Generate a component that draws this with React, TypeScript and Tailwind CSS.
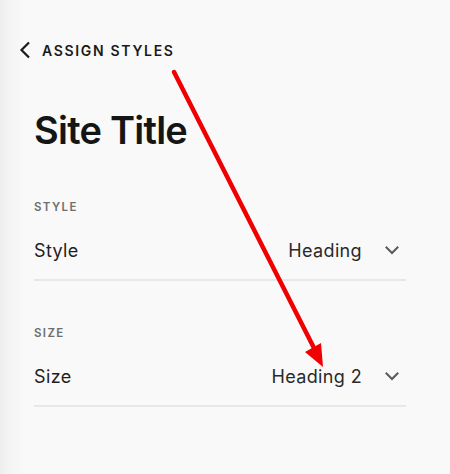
import React from "react";

function ChevronDown() {
  return (
    <svg width="14" height="9" viewBox="0 0 14 9" fill="none" className="shrink-0">
      <path d="M1.5 1.5 L7 7 L12.5 1.5" stroke="#5a5a5a" strokeWidth="2" strokeLinecap="square" />
    </svg>
  );
}

function Field({ label, name, value, gap }: { label: string; name: string; value: string; gap: string }) {
  return (
    <section className={gap}>
      <div className="h-[16px] flex items-center text-[11.5px] font-semibold tracking-[0.12em] text-[#6e6e6e]">
        {label}
      </div>
      <div className="mt-[5px] h-[60px] flex items-center border-b-2 border-[#e8e8e8]">
        <span className="text-[18px] tracking-[0.02em] text-[#1f1f1f]">{name}</span>
        <span className="ml-auto text-[18px] tracking-[0.02em] text-[#2a2a2a]">{value}</span>
        <span className="ml-[23px] mr-[7px] flex items-center">
          <ChevronDown />
        </span>
      </div>
    </section>
  );
}

export default function App() {
  return (
    <div
      className="relative h-[474px] w-full overflow-hidden bg-[#f9f9f9] bg-[linear-gradient(to_right,#eeeeee_0px,#f4f4f4_10px,#f9f9f9_24px)]"
      style={{ fontFamily: "Inter, 'Liberation Sans', sans-serif" }}
    >
      <div className="pt-[40px] pl-[19px] pr-[44px]">
        <button className="h-[20px] flex items-center gap-[11px]">
          <svg width="12" height="18" viewBox="0 0 12 18" fill="none">
            <path d="M10 1.5 L2.5 9 L10 16.5" stroke="#1a1a1a" strokeWidth="2.2" />
          </svg>
          <span className="text-[14px] font-semibold tracking-[0.12em] text-[#1a1a1a]">ASSIGN STYLES</span>
        </button>

        <div className="pl-[15px]">
          <h1 className="mt-[46px] h-[48px] flex items-center text-[38px] font-semibold tracking-[-0.02em] text-[#151515]">
            Site Title
          </h1>

          <Field gap="mt-[46px]" label="STYLE" name="Style" value="Heading" />
          <Field gap="mt-[45px]" label="SIZE" name="Size" value="Heading 2" />
        </div>
      </div>

      <svg className="pointer-events-none absolute inset-0" width="450" height="474" viewBox="0 0 450 474">
        <line x1="174" y1="72" x2="314" y2="348" stroke="#f00000" strokeWidth="4.5" strokeLinecap="round" />
        <polygon points="323,367 305,352 321,343" fill="#f00000" />
      </svg>
    </div>
  );
}
